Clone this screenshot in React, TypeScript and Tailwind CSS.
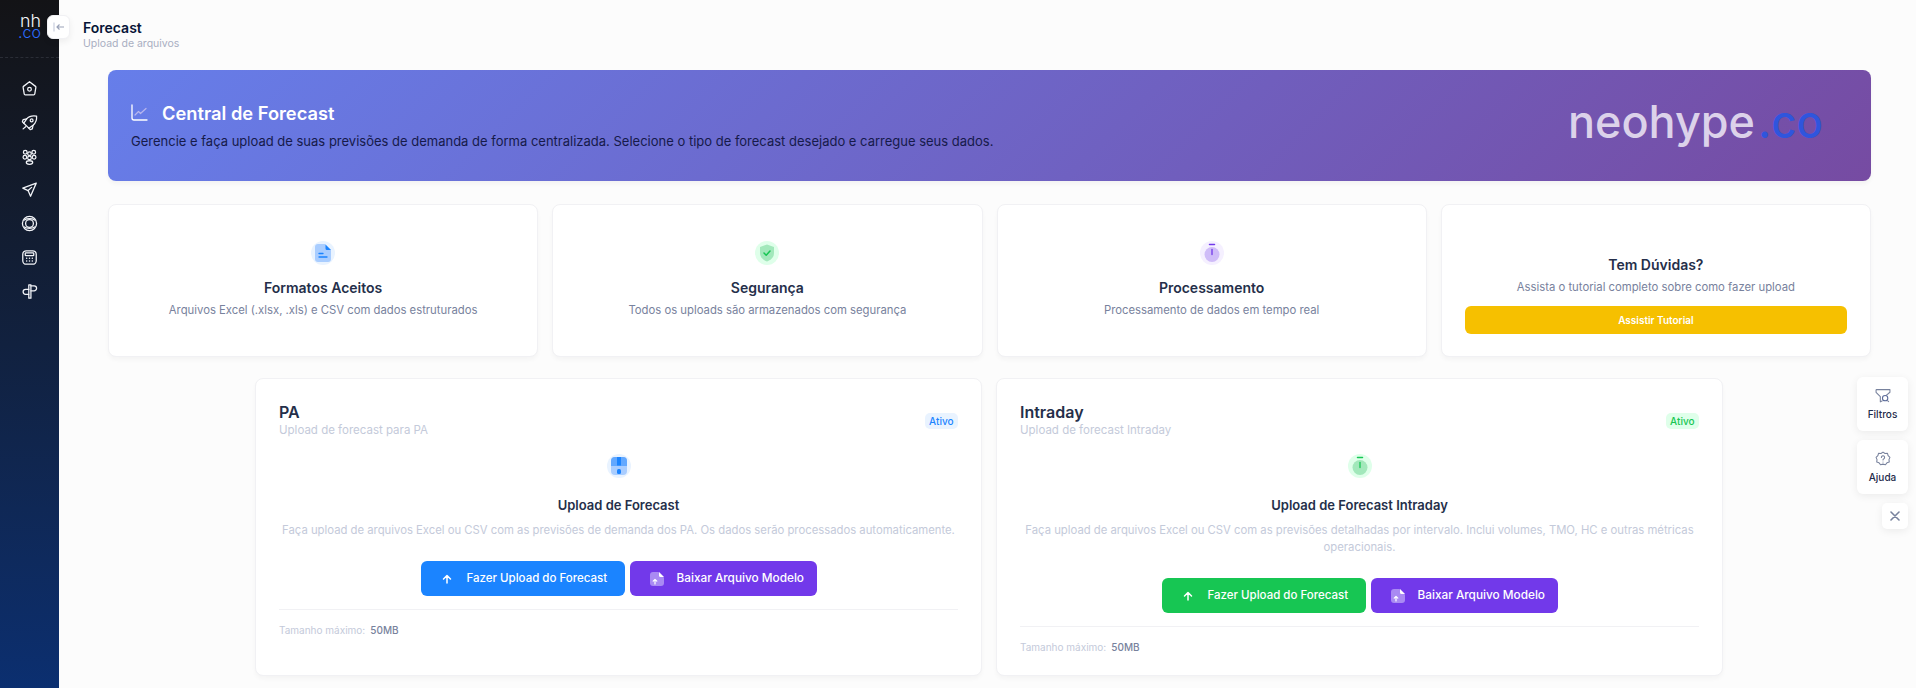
import React from "react";

const font = { fontFamily: "Inter, sans-serif" };

const S = ({ children, size = 17 }: { children: React.ReactNode; size?: number }) => (
  <svg width={size} height={size} viewBox="0 0 24 24" fill="none" stroke="currentColor" strokeWidth={1.8} strokeLinecap="round" strokeLinejoin="round">
    {children}
  </svg>
);

const navIcons = [
  <S key="h"><path d="M12 2.500 3.500 9c-.4.3-.6.8-.5 1.300l1.600 9.500c.1.700.7 1.200 1.400 1.200h12c.7 0 1.300-.5 1.400-1.200l1.600-9.500c.1-.5-.1-1-.5-1.300L12 2.500Z" /><circle cx="12" cy="13" r="2.600" /></S>,
  <S key="r"><path d="M22 3c-6-1-11 .5-14 4L4 13l7 7 6-4c3.500-3 5.500-7 5-13Z" /><path d="M8 7 3 8l-1 3 2 2M17 16l-1 5-3 1-2-2M6.500 18 3 21" /><circle cx="15" cy="9" r="2" /></S>,
  <S key="g"><circle cx="6" cy="6" r="2.600" /><circle cx="18" cy="6" r="2.600" /><circle cx="12" cy="8" r="2.600" /><circle cx="5.500" cy="13" r="2.600" /><circle cx="18.500" cy="13" r="2.600" /><circle cx="12" cy="14" r="2.600" /><ellipse cx="12" cy="20.500" rx="4.500" ry="2.500" /></S>,
  <S key="s"><path d="M21.500 3 2.500 10l7.500 3.500L13.500 21.500 21.500 3Z" /><path d="m10 13.500 5-4.500" /></S>,
  <S key="c"><circle cx="12" cy="12" r="10" /><circle cx="12" cy="12" r="5.500" /><path d="M5 7c3-2.500 11-2.500 14 0M5 17c3 2.500 11 2.500 14 0" /></S>,
  <S key="k"><rect x="2.500" y="2.500" width="19" height="19" rx="5" /><rect x="6" y="5.500" width="12" height="4" rx="1" /><path d="M8 13h.01M12 13h.01M16 13h.01M8 17h.01M12 17h.01M16 17h.01" strokeWidth={2.2} /></S>,
  <S key="p"><path d="M11 2.500v19h3V2.500h-3Z" /><path d="M14 4h4.500a3.500 3.500 0 0 1 0 7H14" /><path d="M11 9H6.500a3.500 3.500 0 0 0 0 7H11" /></S>,
];

const Disc = ({ bg, children, w = 24, h = 24 }: { bg: string; children: React.ReactNode; w?: number; h?: number }) => (
  <div className={`flex items-center justify-center rounded-full ${bg}`} style={{ width: w, height: h }}>
    {children}
  </div>
);

const FileIcon = () => (
  <svg width="20" height="20" viewBox="0 0 20 20">
    <path d="M5 1h7l6 6v9a3 3 0 0 1-3 3H5a3 3 0 0 1-3-3V4a3 3 0 0 1 3-3Z" fill="#a9cdff" />
    <path d="M12.500 1.500 18 7h-4a1.500 1.500 0 0 1-1.500-1.500Z" fill="#1b84ff" />
    <path d="M6 10.500h4M6 14h8" stroke="#1b84ff" strokeWidth="1.300" strokeLinecap="round" />
  </svg>
);
const ShieldIcon = () => (
  <svg width="20" height="20" viewBox="0 0 20 20">
    <path d="M10 1.500 17 4v6c0 4.500-3.500 7.200-7 8.500C6.500 17.200 3 14.500 3 10V4l7-2.500Z" fill="#a2e8bb" />
    <path d="m7 10 2.200 2.200L13 8" stroke="#17c653" strokeWidth="1.500" fill="none" strokeLinecap="round" strokeLinejoin="round" />
  </svg>
);
const TimerIcon = ({ fill, dark }: { fill: string; dark: string }) => (
  <svg width="20" height="20" viewBox="0 0 20 20">
    <circle cx="10" cy="11.500" r="7.500" fill={fill} />
    <path d="M7.500 1.500h5" stroke={dark} strokeWidth="1.500" strokeLinecap="round" />
    <path d="M10 6.500v5" stroke={dark} strokeWidth="1.300" strokeLinecap="round" />
  </svg>
);
const MouseIcon = () => (
  <svg width="20" height="20" viewBox="0 0 20 20">
    <rect x="2" y="1" width="16" height="18" rx="4" fill="#a9cdff" />
    <path d="M2 5a4 4 0 0 1 4-4h8a4 4 0 0 1 4 4v5H2Z" fill="#62a8ff" />
    <rect x="8" y="1" width="4" height="8.500" fill="#1b84ff" />
    <rect x="8" y="13" width="4" height="5" rx="1.500" fill="#1b84ff" />
  </svg>
);
const ArrowUp = () => (
  <svg width="14" height="14" viewBox="0 0 14 14" fill="none" stroke="#fff" strokeWidth="1.500" strokeLinecap="round" strokeLinejoin="round">
    <path d="M7 11V4M3.500 7 7 3.500 10.500 7" />
  </svg>
);
const FileUp = () => (
  <svg width="16" height="16" viewBox="0 0 16 16">
    <path d="M4 1h5.500L15 6.500V12a3 3 0 0 1-3 3H4a3 3 0 0 1-3-3V4a3 3 0 0 1 3-3Z" fill="#a98af3" />
    <path d="M10 1l5 5h-3.500A1.500 1.500 0 0 1 10 4.500Z" fill="#fff" />
    <path d="M6 13V8.500M4.200 10.200 6 8.400l1.800 1.800" stroke="#fff" strokeWidth="1.200" fill="none" strokeLinecap="round" strokeLinejoin="round" />
  </svg>
);

const shadow = "shadow-[0_3px_4px_rgba(0,0,0,0.03)] border border-[#f1f1f4]";

const InfoCard = ({ icon, title, text }: { icon: React.ReactNode; title: string; text: string }) => (
  <div className={`flex h-[153px] flex-col items-center rounded-[8px] bg-white pt-[36px] ${shadow}`}>
    {icon}
    <div className="mt-[13px] text-[14px] font-semibold leading-[20px] text-[#252f4a]">{title}</div>
    <div className="mt-[3px] text-[11.300px] leading-[18px] text-[#78829d]">{text}</div>
  </div>
);

const UploadCard = ({
  title, sub, badgeClass, icon, heading, desc, btnClass,
}: {
  title: string; sub: string; badgeClass: string; icon: React.ReactNode; heading: string; desc: string; btnClass: string;
}) => (
  <div className={`flex h-[298px] flex-col rounded-[8px] bg-white px-[23px] pt-[23px] ${shadow}`}>
    <div className="flex items-start justify-between">
      <div>
        <div className="text-[16px] font-semibold leading-[20px] text-[#252f4a]">{title}</div>
        <div className="text-[11.500px] leading-[17px] text-[#c4cada]">{sub}</div>
      </div>
      <span className={`mt-[11px] rounded-[5px] px-[4.500px] text-[10px] font-medium leading-[16px] ${badgeClass}`}>Ativo</span>
    </div>
    <div className="mt-[15px] flex flex-col items-center">
      {icon}
      <div className="mt-[16px] text-[13px] font-semibold leading-[22px] text-[#252f4a]">{heading}</div>
      <div className="mt-[6px] text-center text-[11.300px] leading-[17px] text-[#c4cada]">{desc}</div>
      <div className="mt-[22px] flex justify-center gap-[5px]">
        <button className={`flex h-[35px] w-[204px] items-center gap-[13px] rounded-[6px] pl-[19px] text-[11.500px] font-medium text-white ${btnClass}`}>
          <ArrowUp />Fazer Upload do Forecast
        </button>
        <button className="flex h-[35px] w-[187px] items-center gap-[12px] rounded-[6px] bg-[#7239ea] pl-[19px] text-[11.800px] font-medium text-white">
          <FileUp />Baixar Arquivo Modelo
        </button>
      </div>
    </div>
    <div className="mt-[13px] border-t border-[#f1f1f4] pt-[12px] text-[10px] leading-[16px]">
      <span className="text-[#c4cada]">Tamanho máximo:</span>
      <span className="ml-[5px] font-medium text-[#78829d]">50MB</span>
    </div>
  </div>
);

export default function App() {
  return (
    <div className="relative flex h-screen overflow-hidden bg-[#fcfcfc]" style={font}>
      <aside className="flex w-[59px] shrink-0 flex-col items-center bg-gradient-to-b from-[#131316] via-[#11213f] to-[#0b2f70] text-[#f2f4f8]">
        <svg width="26" height="24" viewBox="0 0 26 24" className="mt-[15px] overflow-visible">
          <text x="3" y="12" fontFamily="Inter, sans-serif" fontSize="17" fontWeight="300" fill="#f2f4f8" textLength="21" lengthAdjust="spacingAndGlyphs">nh</text>
          <text x="1" y="23" fontFamily="Inter, sans-serif" fontSize="16" fontWeight="300" fill="#2b6cff" textLength="23" lengthAdjust="spacingAndGlyphs">.co</text>
        </svg>
        <div className="mt-[18px] w-full border-t border-dashed border-[#2a2d36]" />
        <nav className="mt-[22px] flex flex-col items-center gap-[16.800px]">{navIcons}</nav>
      </aside>

      <button className="absolute left-[47px] top-[15px] flex h-[24px] w-[23px] items-center justify-center rounded-[6px] border border-[#f1f1f4] bg-white shadow-[0_3px_6px_rgba(0,0,0,0.06)]">
        <svg width="12" height="10" viewBox="0 0 12 10" fill="none" stroke="#99a1b7" strokeWidth="1.200">
          <path d="M1 .5v9" stroke="#d5d9e4" strokeWidth="1.500" />
          <path d="M11 5H4M6.500 2.500 4 5l2.500 2.500" />
        </svg>
      </button>

      <main className="min-w-0 flex-1">
        <header className="h-[70px] pl-[24px] pt-[20px]">
          <div className="text-[14px] font-semibold leading-[15px] text-[#071437]">Forecast</div>
          <div className="mt-[1px] text-[10.500px] leading-[15px] text-[#a9afc2]">Upload de arquivos</div>
        </header>

        <div className="ml-[49px] mr-[45px]">
          <section className="flex h-[111px] items-center justify-between rounded-[8px] bg-[linear-gradient(135deg,#667eea,#764ba2)] pl-[23px] pr-[48px] shadow-[0_3px_4px_rgba(0,0,0,0.04)]">
            <div className="mb-[2px]">
              <div className="flex items-center gap-[14px]">
                <svg width="17" height="17" viewBox="0 0 17 17" fill="none" strokeLinecap="round" strokeLinejoin="round">
                  <path d="M1 1v13a2 2 0 0 0 2 2h13" stroke="#fff" strokeWidth="1.300" />
                  <path d="M4 11l3.500-3.500 2 2L15 4.500" stroke="#b8b6ee" strokeWidth="1.200" />
                </svg>
                <h1 className="text-[18.300px] font-semibold leading-[28px] text-white">Central de Forecast</h1>
              </div>
              <p className="mt-[4px] text-[13px] leading-[20px] text-[#161a4a]">
                Gerencie e faça upload de suas previsões de demanda de forma centralizada. Selecione o tipo de forecast desejado e carregue seus dados.
              </p>
            </div>
            <svg width="255" height="50" viewBox="0 0 255 50" className="shrink-0 overflow-visible">
              <text x="0" y="37" fontFamily="Inter, sans-serif" fontSize="45" fontWeight="500" fill="#dcd2ea" textLength="187" lengthAdjust="spacingAndGlyphs">neohype</text>
              <text x="190" y="37" fontFamily="Inter, sans-serif" fontSize="45" fontWeight="500" fill="#2f55dd" textLength="65" lengthAdjust="spacingAndGlyphs">.co</text>
            </svg>
          </section>

          <section className="mt-[23px] grid grid-cols-4 gap-[14px]">
            <InfoCard icon={<Disc bg="bg-[#e9f3ff]"><FileIcon /></Disc>} title="Formatos Aceitos" text="Arquivos Excel (.xlsx, .xls) e CSV com dados estruturados" />
            <InfoCard icon={<Disc bg="bg-[#dfffea]"><ShieldIcon /></Disc>} title="Segurança" text="Todos os uploads são armazenados com segurança" />
            <InfoCard icon={<Disc bg="bg-[#f5f0ff]"><TimerIcon fill="#cfbcf8" dark="#7239ea" /></Disc>} title="Processamento" text="Processamento de dados em tempo real" />
            <div className={`flex h-[153px] flex-col items-center rounded-[8px] bg-white px-[23px] pt-[50px] ${shadow}`}>
              <div className="text-[14px] font-semibold leading-[20px] text-[#252f4a]">Tem Dúvidas?</div>
              <div className="mt-[3px] text-[11.300px] leading-[18px] text-[#78829d]">Assista o tutorial completo sobre como fazer upload</div>
              <button className="mt-[10px] h-[28px] w-full rounded-[6px] bg-[#f6c000] text-[10px] font-semibold text-white">Assistir Tutorial</button>
            </div>
          </section>

          <section className="ml-[147px] mt-[21px] grid w-[1468px] grid-cols-2 gap-[14px]">
            <UploadCard
              title="PA" sub="Upload de forecast para PA" badgeClass="bg-[#e9f3ff] text-[#1b84ff]"
              icon={<Disc bg="bg-[#e9f3ff]"><MouseIcon /></Disc>}
              heading="Upload de Forecast"
              desc="Faça upload de arquivos Excel ou CSV com as previsões de demanda dos PA. Os dados serão processados automaticamente."
              btnClass="bg-[#1b84ff]"
            />
            <UploadCard
              title="Intraday" sub="Upload de forecast Intraday" badgeClass="bg-[#dfffea] text-[#17c653]"
              icon={<Disc bg="bg-[#dfffea]"><TimerIcon fill="#a2e8bb" dark="#17c653" /></Disc>}
              heading="Upload de Forecast Intraday"
              desc="Faça upload de arquivos Excel ou CSV com as previsões detalhadas por intervalo. Inclui volumes, TMO, HC e outras métricas operacionais."
              btnClass="bg-[#17c653]"
            />
          </section>
        </div>
      </main>

      <div className="absolute right-[8px] top-[377px] flex flex-col items-end gap-[9px]">
        <div className="flex h-[54px] w-[51px] flex-col items-center justify-center gap-[4px] rounded-[6px] bg-white shadow-[0_2px_8px_rgba(0,0,0,0.07)]">
          <svg width="16" height="16" viewBox="0 0 15 15" fill="none" stroke="#78829d" strokeWidth="1" strokeLinejoin="round">
            <path d="M1 1.500h13v2.500L10.500 7M1 1.500V4l4 4v5l2-1" />
            <circle cx="9.500" cy="9.500" r="2.500" stroke="#5b6b9a" />
            <path d="m11.500 11.500 1.500 1.500" />
          </svg>
          <span className="text-[10px] font-medium leading-[13px] text-[#1e2a4a]">Filtros</span>
        </div>
        <div className="flex h-[54px] w-[51px] flex-col items-center justify-center gap-[4px] rounded-[6px] bg-white shadow-[0_2px_8px_rgba(0,0,0,0.07)]">
          <svg width="16" height="16" viewBox="0 0 15 15" fill="none" stroke="#78829d" strokeWidth="1" strokeLinecap="round" strokeLinejoin="round">
            <path d="m7.500 1 1.900 1.300 2.300-.1.600 2.200 1.700 1.600-.9 2.100.3 2.300-2.200.7-1.400 1.800-2.300-.6-2.300.6-1.400-1.800-2.200-.7.3-2.300-.9-2.100 1.700-1.600.6-2.200 2.300.1L7.500 1Z" />
            <path d="M6 6a1.500 1.500 0 1 1 2.300 1.300c-.5.3-.8.600-.8 1.100M7.500 10.300h.01" />
          </svg>
          <span className="text-[10px] font-medium leading-[13px] text-[#1e2a4a]">Ajuda</span>
        </div>
        <div className="flex h-[26px] w-[26px] items-center justify-center rounded-[5px] bg-white shadow-[0_2px_8px_rgba(0,0,0,0.07)]">
          <svg width="10" height="10" viewBox="0 0 10 10" stroke="#78829d" strokeWidth="1.600" strokeLinecap="round">
            <path d="m1 1 8 8M9 1 1 9" />
          </svg>
        </div>
      </div>
    </div>
  );
}
